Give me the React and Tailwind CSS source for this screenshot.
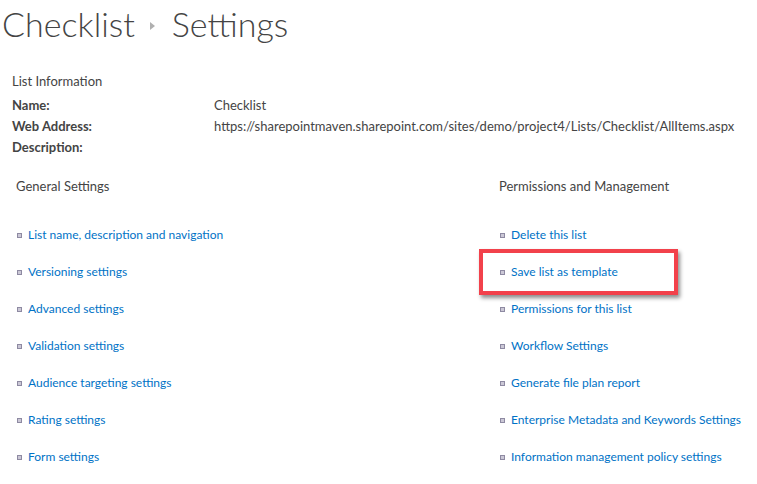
import React from 'react';

// Página de configuración de lista (estilo SharePoint)
const general = [
  'List name, description and navigation',
  'Versioning settings',
  'Advanced settings',
  'Validation settings',
  'Audience targeting settings',
  'Rating settings',
  'Form settings',
];

const perms = [
  'Delete this list',
  'Save list as template',
  'Permissions for this list',
  'Workflow Settings',
  'Generate file plan report',
  'Enterprise Metadata and Keywords Settings',
  'Information management policy settings',
];

const Bullet = () => (
  <span className="inline-block w-[5px] h-[5px] border border-[#8e8aa2] bg-[#cbc8d6] shrink-0" />
);

const LinkRow = ({ text, marked }) => (
  <div className="relative flex items-center gap-[6px] h-[20px]">
    <Bullet />
    <a className="text-[#0072c6] text-[12px] whitespace-nowrap">{text}</a>
    {marked && (
      <div className="absolute left-[-21px] top-[-13px] w-[199px] h-[46px] border-4 border-[#f2414b] shadow-[2px_3px_4px_rgba(0,0,0,0.45)]" />
    )}
  </div>
);

const App = () => {
  return (
    <div
      className="w-[757px] h-[484px] bg-white overflow-hidden text-[13px] text-[#444]"
      style={{ fontFamily: 'Lato, "Open Sans", sans-serif' }}
    >
      {/* Título */}
      <div className="flex items-center h-[48px] pl-[2px] text-[34px] font-light text-[#444] leading-[48px]">
        <span>Checklist</span>
        <span className="ml-[15px] mr-[17px] w-0 h-0 border-y-[4px] border-y-transparent border-l-[5px] border-l-[#b0b0b0] mt-[4px]" />
        <span>Settings</span>
      </div>

      {/* Información de la lista */}
      <div className="mt-[23px] pl-[12px]">
        <div className="h-[20px] leading-[20px]">List Information</div>
        <div className="flex flex-col mt-[4px]">
          <div className="flex h-[21px] leading-[21px]">
            <span className="w-[202px] shrink-0 font-bold">Name:</span>
            <span>Checklist</span>
          </div>
          <div className="flex h-[21px] leading-[21px]">
            <span className="w-[202px] shrink-0 font-bold">Web Address:</span>
            <span className="whitespace-nowrap">https://sharepointmaven.sharepoint.com/sites/demo/project4/Lists/Checklist/AllItems.aspx</span>
          </div>
          <div className="flex h-[21px] leading-[21px]">
            <span className="w-[202px] shrink-0 font-bold">Description:</span>
            <span />
          </div>
        </div>
      </div>

      {/* Columnas */}
      <div className="flex mt-[18px]">
        <div className="w-[499px] shrink-0 pl-[16px]">
          <div className="h-[20px] leading-[20px]">General Settings</div>
          <div className="flex flex-col gap-[17px] mt-[29px] pl-[1px]">
            {general.map((t) => (
              <LinkRow key={t} text={t} />
            ))}
          </div>
        </div>
        <div className="flex-1">
          <div className="h-[20px] leading-[20px]">Permissions and Management</div>
          <div className="flex flex-col gap-[17px] mt-[29px] pl-[1px]">
            {perms.map((t, i) => (
              <LinkRow key={t} text={t} marked={i === 1} />
            ))}
          </div>
        </div>
      </div>
    </div>
  );
};

export default App;
